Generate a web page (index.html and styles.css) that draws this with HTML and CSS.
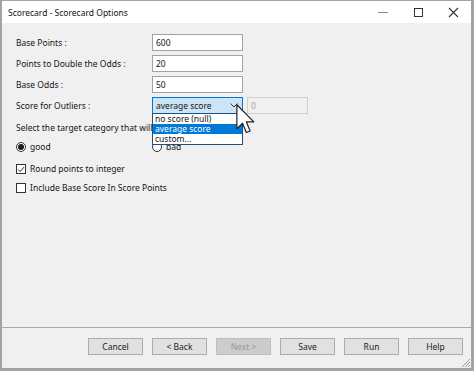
FILE: index.html
```html
<!DOCTYPE html>
<html lang="en">
<head>
    <meta charset="UTF-8">
    <title>Scorecard - Scorecard Options</title>
    <link rel="stylesheet" href="styles.css">
</head>
<body>
    <div class="window">
        <!-- title bar -->
        <div class="titlebar">
            <span class="title">Scorecard - Scorecard Options</span>
            <div class="controls">
                <span class="ctl">
                    <svg width="11" height="11" viewBox="0 0 11 11"><path d="M0 5.5H10" stroke="#8a8a8a" stroke-width="1"/></svg>
                </span>
                <span class="ctl">
                    <svg width="11" height="11" viewBox="0 0 11 11"><rect x="1.5" y="1.5" width="8" height="8" fill="none" stroke="#333" stroke-width="1"/></svg>
                </span>
                <span class="ctl">
                    <svg width="11" height="11" viewBox="0 0 11 11"><path d="M1 1L10 10M10 1L1 10" stroke="#333" stroke-width="1.1"/></svg>
                </span>
            </div>
        </div>

        <!-- options -->
        <div class="content">
            <div class="fields">
                <span class="label">Base Points :</span>
                <div class="textbox">600</div>

                <span class="label">Points to Double the Odds :</span>
                <div class="textbox">20</div>

                <span class="label">Base Odds :</span>
                <div class="textbox">50</div>

                <span class="label">Score for Outliers :</span>
                <div class="combo-row">
                    <div class="combo">
                        <span>average score</span>
                        <svg width="8" height="5" viewBox="0 0 8 5"><path d="M0.5 0.5L4 4L7.5 0.5" fill="none" stroke="#333" stroke-width="1"/></svg>
                        <ul class="dropdown">
                            <li>no score (null)</li>
                            <li class="selected">average score</li>
                            <li>custom...</li>
                        </ul>
                    </div>
                    <div class="textbox disabled">0</div>
                </div>
            </div>

            <p class="prompt">Select the target category that will be scored higher:</p>

            <div class="radios">
                <span class="option"><span class="radio checked"></span>good</span>
                <span class="option"><span class="radio"></span>bad</span>
            </div>

            <div class="option check-row">
                <span class="checkbox">
                    <svg width="10" height="10" viewBox="0 0 10 10"><path d="M1.5 5L4 7.5L8.8 2" fill="none" stroke="#222" stroke-width="1.2"/></svg>
                </span>
                Round points to integer
            </div>
            <div class="option check-row second">
                <span class="checkbox"></span>
                Include Base Score In Score Points
            </div>
        </div>

        <!-- buttons -->
        <div class="footer">
            <button class="btn">Cancel</button>
            <button class="btn">&lt; Back</button>
            <button class="btn" disabled>Next &gt;</button>
            <button class="btn">Save</button>
            <button class="btn">Run</button>
            <button class="btn">Help</button>
        </div>

        <svg class="grip" width="9" height="9" viewBox="0 0 9 9">
            <path d="M9 1L1 9M9 4L4 9M9 7L7 9" stroke="#9a9a9a" stroke-width="1"/>
        </svg>
    </div>

    <!-- mouse pointer -->
    <svg class="cursor" width="19" height="30" viewBox="0 0 12.5 20">
        <path d="M0.5 0.5V16.5L4.3 12.8L6.8 19L9.3 18L6.8 11.9H11.8Z" fill="#fff" stroke="#222" stroke-width="0.8" stroke-linejoin="round"/>
    </svg>
</body>
</html>
```

FILE: styles.css
```css
/* Reset */
* {
    margin: 0;
    padding: 0;
    box-sizing: border-box;
}

body {
    font-family: 'Noto Sans', 'Open Sans', sans-serif;
    font-size: 8.5px;
    color: #141414;
    background: #ffffff;
    position: relative;
    width: 474px;
    height: 371px;
    overflow: hidden;
}

/* Window frame */
.window {
    position: relative;
    width: 474px;
    height: 371px;
    display: flex;
    flex-direction: column;
    background: #f0f0f0;
    border-style: solid;
    border-color: #a3a3a3;
    border-width: 1px 3px 3px 2px;
}

.titlebar {
    height: 22px;
    background: #ffffff;
    display: flex;
    align-items: center;
    justify-content: space-between;
    padding-left: 6px;
}

.title {
    font-size: 8.5px;
    color: #111;
}

.controls {
    display: flex;
    height: 100%;
}

.ctl {
    width: 35px;
    display: flex;
    align-items: center;
    justify-content: center;
}

/* Content */
.content {
    flex: 1;
    padding: 11px 0 0 14px;
}

.fields {
    display: grid;
    grid-template-columns: 136px auto;
    grid-auto-rows: 17px;
    row-gap: 4px;
    align-items: center;
}

.textbox {
    width: 91px;
    height: 17px;
    background: #ffffff;
    border: 1px solid #a2a2a2;
    padding-left: 3px;
    line-height: 15px;
}

.textbox.disabled {
    width: 61px;
    background: #f0f0f0;
    border-color: #cfcfcf;
    color: #a5a5a5;
}

.combo-row {
    display: flex;
    gap: 4px;
    height: 17px;
}

.combo {
    position: relative;
    width: 91px;
    height: 17px;
    background: #cce4f7;
    border: 1px solid #0078d7;
    display: flex;
    align-items: center;
    justify-content: space-between;
    padding: 0 4px 0 3px;
}

.dropdown {
    position: absolute;
    top: 15px;
    left: -1px;
    width: 91px;
    list-style: none;
    background: #ffffff;
    border: 1px solid #1f4f86;
    z-index: 2;
}

.dropdown li {
    height: 10px;
    line-height: 10px;
    padding-left: 2px;
}

.dropdown li.selected {
    background: #0078d7;
    color: #ffffff;
}

.prompt {
    margin-top: 7px;
    line-height: 14px;
}

.radios {
    display: flex;
    margin-top: 5px;
}

.option {
    display: flex;
    align-items: center;
    gap: 4px;
    height: 14px;
    line-height: 14px;
}

.radios .option {
    width: 136px;
}

.radio {
    width: 10px;
    height: 10px;
    border: 1px solid #333;
    border-radius: 50%;
    background: #ffffff;
    display: flex;
    align-items: center;
    justify-content: center;
}

.radio.checked::after {
    content: "";
    width: 6px;
    height: 6px;
    border-radius: 50%;
    background: #1a1a1a;
}

.check-row {
    margin-top: 8px;
}

.check-row.second {
    margin-top: 5px;
}

.checkbox {
    width: 10px;
    height: 10px;
    border: 1px solid #333;
    background: #ffffff;
    display: flex;
    align-items: center;
    justify-content: center;
}

.checkbox svg {
    width: 9px;
    height: 9px;
}

/* Footer buttons */
.footer {
    border-top: 1px solid #a8a8a8;
    padding: 10px 8px 0 0;
    height: 41px;
    display: flex;
    justify-content: flex-end;
    gap: 9px;
}

.btn {
    width: 55px;
    height: 17px;
    font-family: 'Noto Sans', 'Open Sans', sans-serif;
    font-size: 8.5px;
    color: #1a1a1a;
    background: #e1e1e1;
    border: 1px solid #adadad;
}

.btn:disabled {
    background: #cccccc;
    border-color: #bfbfbf;
    color: #9a9a9a;
}

.grip {
    position: absolute;
    right: 1px;
    bottom: 1px;
}

.cursor {
    position: absolute;
    left: 236px;
    top: 104px;
    z-index: 5;
}
```
